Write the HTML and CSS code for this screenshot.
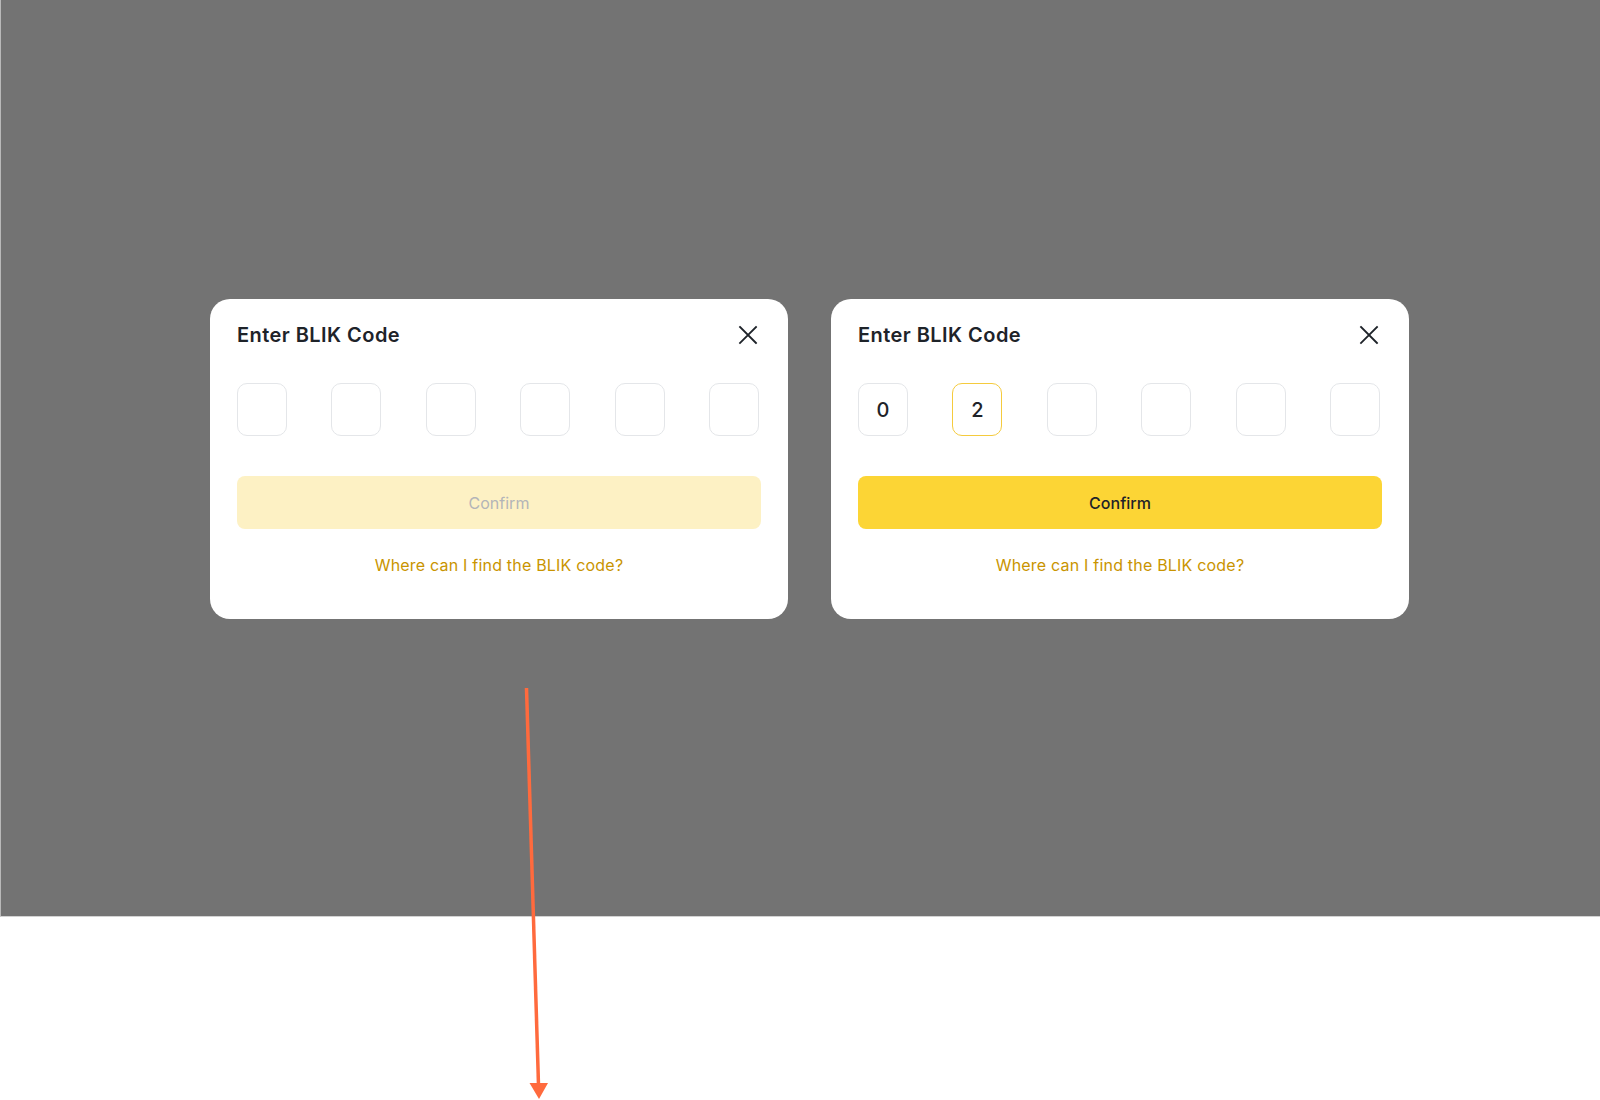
FILE: index.html
```html
<!DOCTYPE html>
<html lang="en">
<head>
<meta charset="utf-8">
<title>Enter BLIK Code</title>
<link rel="stylesheet" href="styles.css">
</head>
<body>
<div class="stage">
  <div class="card">
    <div class="card-head">
      <h2 class="title">Enter BLIK Code</h2>
      <button class="close" aria-label="Close">
        <svg width="24" height="24" viewBox="0 0 24 24"><path d="M4 4 L20 20 M20 4 L4 20" stroke="#1E2329" stroke-width="1.8" fill="none" stroke-linecap="square"/></svg>
      </button>
    </div>
    <div class="code-row">
      <div class="digit"></div>
      <div class="digit"></div>
      <div class="digit"></div>
      <div class="digit"></div>
      <div class="digit"></div>
      <div class="digit"></div>
    </div>
    <button class="confirm confirm-disabled">Confirm</button>
    <a class="help-link">Where can I find the BLIK code?</a>
  </div>

  <div class="card">
    <div class="card-head">
      <h2 class="title">Enter BLIK Code</h2>
      <button class="close" aria-label="Close">
        <svg width="24" height="24" viewBox="0 0 24 24"><path d="M4 4 L20 20 M20 4 L4 20" stroke="#1E2329" stroke-width="1.8" fill="none" stroke-linecap="square"/></svg>
      </button>
    </div>
    <div class="code-row">
      <div class="digit">0</div>
      <div class="digit digit-focus">2</div>
      <div class="digit"></div>
      <div class="digit"></div>
      <div class="digit"></div>
      <div class="digit"></div>
    </div>
    <button class="confirm confirm-active">Confirm</button>
    <a class="help-link">Where can I find the BLIK code?</a>
  </div>
</div>
<svg class="annotation" width="1600" height="1100" viewBox="0 0 1600 1100">
  <line x1="526.5" y1="688" x2="538.5" y2="1085" stroke="#FF6A3D" stroke-width="3.5"/>
  <polygon points="529.5,1083 548,1083 539,1099" fill="#FF6A3D"/>
</svg>
</body>
</html>
```
FILE: styles.css
```css
html, body {
  margin: 0;
  padding: 0;
  background: #ffffff;
  font-family: "Inter", "Liberation Sans", sans-serif;
}

.stage {
  height: 917px;
  box-sizing: border-box;
  background: #737373;
  border-left: 1px solid #b9b9b9;
  border-bottom: 1px solid #d2d2d2;
  display: flex;
  align-items: flex-start;
  gap: 43px;
  padding-top: 299px;
  padding-left: 209px;
}

.card {
  width: 578px;
  height: 320px;
  box-sizing: border-box;
  background: #ffffff;
  border-radius: 20px;
  padding: 22px 27px 0 27px;
  display: flex;
  flex-direction: column;
}

.card-head {
  display: flex;
  align-items: center;
  justify-content: space-between;
  height: 28px;
}

.title {
  margin: 0;
  font-size: 20px;
  line-height: 28px;
  font-weight: 600;
  color: #1E2329;
  letter-spacing: 0.45px;
}

.close {
  width: 24px;
  height: 24px;
  padding: 0;
  margin: 0 1px 0 0;
  border: none;
  background: none;
  display: flex;
}

.code-row {
  margin-top: 34px;
  display: flex;
  justify-content: space-between;
  padding-right: 2px;
}

.digit {
  width: 50px;
  height: 53px;
  box-sizing: border-box;
  border: 1px solid #E4E6E9;
  border-radius: 10px;
  display: flex;
  align-items: center;
  justify-content: center;
  font-size: 20px;
  font-weight: 500;
  color: #1E2329;
}

.digit-focus {
  border-color: #F5CB3E;
}

.confirm {
  margin-top: 40px;
  height: 53px;
  width: 100%;
  border: none;
  border-radius: 8px;
  font-family: inherit;
  font-size: 16px;
  font-weight: 400;
}

.confirm-disabled {
  background: #FDF1C4;
  color: #B3B5B8;
}

.confirm-active {
  background: #FCD535;
  color: #1E2329;
  font-weight: 500;
}

.help-link {
  margin-top: 24px;
  text-align: center;
  font-size: 16px;
  line-height: 24px;
  color: #C99400;
  letter-spacing: 0.2px;
}

.annotation {
  position: absolute;
  top: 0;
  left: 0;
  pointer-events: none;
}
```
